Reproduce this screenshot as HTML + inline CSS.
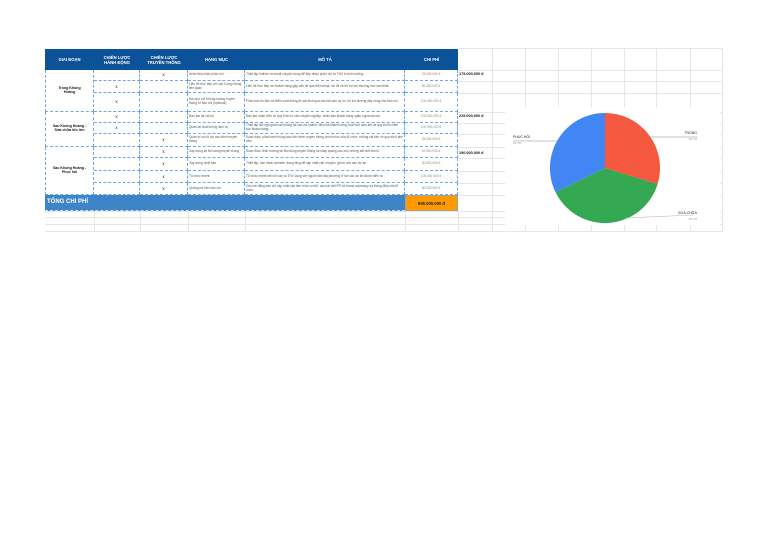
<!DOCTYPE html>
<html><head><meta charset="utf-8"><style>
*{margin:0;padding:0;box-sizing:border-box}
body{width:768px;height:543px;background:#fff;position:relative;overflow:hidden;font-family:"Liberation Sans","Noto Sans CJK SC",sans-serif}
.a{position:absolute}
.gv{position:absolute;width:1px;background:#e6e6e6}
.gh{position:absolute;height:1px;background:#e6e6e6}
.hd{position:absolute;background:#0b5298;color:#fff;font-size:4.2px;font-weight:bold;display:flex;align-items:center;justify-content:center;text-align:center;line-height:5px}
.c{position:absolute;border-right:1px dashed #6fa8e8;border-bottom:1px dashed #6fa8e8;font-size:3.2px;color:#555;display:flex;align-items:center;line-height:3.8px;padding:0 1px;overflow:hidden;background:#fff}
.cc{justify-content:center;text-align:center}
.b{font-weight:bold;color:#111;font-size:3.6px}
</style></head><body>
<div class="gv" style="left:492px;top:48px;height:184px"></div>
<div class="gv" style="left:525px;top:48px;height:184px"></div>
<div class="gv" style="left:558px;top:48px;height:184px"></div>
<div class="gv" style="left:591px;top:48px;height:184px"></div>
<div class="gv" style="left:624px;top:48px;height:184px"></div>
<div class="gv" style="left:656px;top:48px;height:184px"></div>
<div class="gv" style="left:690px;top:48px;height:184px"></div>
<div class="gv" style="left:722px;top:48px;height:184px"></div>
<div class="gh" style="left:458px;top:48px;width:264px"></div>
<div class="gh" style="left:458px;top:70px;width:264px"></div>
<div class="gh" style="left:458px;top:81px;width:264px"></div>
<div class="gh" style="left:458px;top:93px;width:264px"></div>
<div class="gh" style="left:458px;top:112px;width:264px"></div>
<div class="gh" style="left:458px;top:123px;width:264px"></div>
<div class="gh" style="left:458px;top:134px;width:264px"></div>
<div class="gh" style="left:458px;top:147px;width:264px"></div>
<div class="gh" style="left:458px;top:158px;width:264px"></div>
<div class="gh" style="left:458px;top:171px;width:264px"></div>
<div class="gh" style="left:458px;top:183px;width:264px"></div>
<div class="gh" style="left:458px;top:195px;width:264px"></div>
<div class="gh" style="left:45px;top:211px;width:677px"></div>
<div class="gh" style="left:45px;top:217px;width:677px"></div>
<div class="gh" style="left:45px;top:224px;width:677px"></div>
<div class="gh" style="left:45px;top:231px;width:677px"></div>
<div class="gv" style="left:94px;top:211px;height:21px"></div>
<div class="gv" style="left:140px;top:211px;height:21px"></div>
<div class="gv" style="left:188px;top:211px;height:21px"></div>
<div class="gv" style="left:245px;top:211px;height:21px"></div>
<div class="gv" style="left:405px;top:211px;height:21px"></div>
<div class="gv" style="left:458px;top:211px;height:21px"></div>

<div class="hd" style="left:45px;top:49px;width:49px;height:21px">GIAI ĐOẠN</div>
<div class="hd" style="left:94px;top:49px;width:46px;height:21px">CHIẾN LƯỢC<br>HÀNH ĐỘNG</div>
<div class="hd" style="left:140px;top:49px;width:48px;height:21px">CHIẾN LƯỢC<br>TRUYỀN THÔNG</div>
<div class="hd" style="left:188px;top:49px;width:57px;height:21px">HẠNG MỤC</div>
<div class="hd" style="left:245px;top:49px;width:160px;height:21px">MÔ TẢ</div>
<div class="hd" style="left:405px;top:49px;width:53px;height:21px">CHI PHÍ</div>

<div class="c cc b" style="left:45px;top:70px;width:49px;height:42px;border-left:1px dashed #6fa8e8">Trong Khủng<br>Hoảng</div>
<div class="c cc b" style="left:45px;top:112px;width:49px;height:35px;border-left:1px dashed #6fa8e8">Sau Khủng Hoảng -<br>Sửa chữa tổn lớn</div>
<div class="c cc b" style="left:45px;top:147px;width:49px;height:48px;border-left:1px dashed #6fa8e8">Sau Khủng Hoảng -<br>Phục hồi</div>

<div id="rows"></div>
<script>
var r=[70,81,93,112,123,134,147,158,171,183,195];
var act=[0,1,1,1,1,0,0,0,0,0];
var hm=["Kênh tiếp nhận phản hồi","Liên hệ trực tiếp với các Công chúng liên quan","Đối phó với Khủng hoảng truyền thông từ báo chí (optional)","Đào tạo lại nội bộ","Quản lại chất lượng dịch vụ","Quản trị và hỗ trợ các kênh truyền thông","Xây dựng lại Nội dung truyền thông","Xây dựng nhật báo","Tổ chức event","Quảng bá trên báo chí"];
var mt=["Thiết lập hotline và email chuyên dụng để tiếp nhận phản hồi từ TNV bị ảnh hưởng.","Liên hệ trực tiếp với khách hàng gặp vấn đề qua điện thoại, xin lỗi và hỗ trợ bồi thường nếu cần thiết.","Phản bác tin đồn và kiểm soát thông tin sai lệch qua các bài báo uy tín, hỗ trợ đường dây nóng cho báo chí.","Đào tạo nhân viên về quy trình tư vấn chuyên nghiệp, nhấn sâu khách hàng ngăn ngừa sai sót.","Thiết lập đội ngũ giám sát không tại các chi nhánh, điều tra khách hàng, tuân thủ cam kết và quy trình chăm sóc khách hàng.","Soạn thảo, phát hành thông báo liên kênh truyền thông chính thức của tổ chức, những cải tiến về quy trình làm việc.","Soạn thảo, định hướng lại Nội dung truyền thông và chạy quảng cáo cho những bài viết chính.","Thiết lập, vận hành website, trang blog để cập nhật câu chuyện, giá trị của các dự án.","Tổ chức event kết nối các vụ TNV cùng với người dân địa phương ở nơi các dự án được diễn ra.","Các bài đăng báo chí cập nhật các tiến trình cụ thể, các bài viết PR về brand advocacy và thông điệp của tổ chức."];
var cp=["25.000.000 đ","50.000.000 đ","100.000.000 đ","100.000.000 đ","100.000.000 đ","25.000.000 đ","10.000.000 đ","30.000.000 đ","100.000.000 đ","50.000.000 đ"];
var h="";
for(var i=0;i<10;i++){var t=r[i],hh=r[i+1]-r[i];
h+='<div class="c cc" style="left:94px;top:'+t+'px;width:46px;height:'+hh+'px;font-size:4.5px;color:#222">'+(act[i]?'x':'')+'</div>';
h+='<div class="c cc" style="left:140px;top:'+t+'px;width:48px;height:'+hh+'px;font-size:4.5px;color:#222">'+(act[i]?'':'x')+'</div>';
h+='<div class="c" style="left:188px;top:'+t+'px;width:57px;height:'+hh+'px">'+hm[i]+'</div>';
h+='<div class="c" style="left:245px;top:'+t+'px;width:160px;height:'+hh+'px">'+mt[i]+'</div>';
h+='<div class="c cc" style="left:405px;top:'+t+'px;width:53px;height:'+hh+'px;color:#888">'+cp[i]+'</div>';}
document.getElementById('rows').innerHTML=h;
</script>
<div class="a b" style="left:459px;top:72px;font-size:3.8px">175.000.000 đ</div>
<div class="a b" style="left:459px;top:114px;font-size:3.8px">225.000.000 đ</div>
<div class="a b" style="left:459px;top:151px;font-size:3.8px">190.000.000 đ</div>

<div class="a" style="left:45px;top:195px;width:360px;height:16px;background:#3d85c6;border-bottom:1px dashed #cfe2f7;color:#fff;font-size:6px;font-weight:bold;padding:4px 2px">TỔNG CHI PHÍ</div>
<div class="a" style="left:405px;top:195px;width:53px;height:16px;background:#ff9900;border:1px dashed #6fa8e8;font-size:4.2px;font-weight:bold;color:#222;display:flex;align-items:center;justify-content:center">590.000.000 đ</div>

<div class="a" style="left:505px;top:107px;width:215px;height:118px;background:#fff"></div>
<svg class="a" style="left:0;top:0" width="768" height="543">
<path d="M605 168 L605 113 A55 55 0 0 1 657.6 184.1 Z" fill="#f4583e"/>
<path d="M605 168 L657.6 184.1 A55 55 0 0 1 555.6 192.3 Z" fill="#34a853"/>
<path d="M605 168 L555.6 192.3 A55 55 0 0 1 605 113 Z" fill="#4285f4"/>
<line x1="647" y1="137" x2="697" y2="137" stroke="#888" stroke-width="0.6"/>
<line x1="513" y1="141" x2="561" y2="141" stroke="#888" stroke-width="0.6"/>
<line x1="625" y1="218" x2="693" y2="215" stroke="#bbb" stroke-width="0.6"/>
<text x="697" y="134" font-size="3.5" text-anchor="end" fill="#222" font-family="Liberation Sans">TRONG</text>
<text x="697" y="140" font-size="3" text-anchor="end" fill="#999" font-family="Liberation Sans">29,7%</text>
<text x="513" y="138" font-size="3.5" fill="#222" font-family="Liberation Sans">PHỤC HỒI</text>
<text x="513" y="144" font-size="3" fill="#999" font-family="Liberation Sans">32,2%</text>
<text x="697" y="214" font-size="3.5" text-anchor="end" fill="#222" font-family="Liberation Sans">SỬA CHỮA</text>
<text x="697" y="220" font-size="3" text-anchor="end" fill="#999" font-family="Liberation Sans">38,1%</text>
</svg>
</body></html>
